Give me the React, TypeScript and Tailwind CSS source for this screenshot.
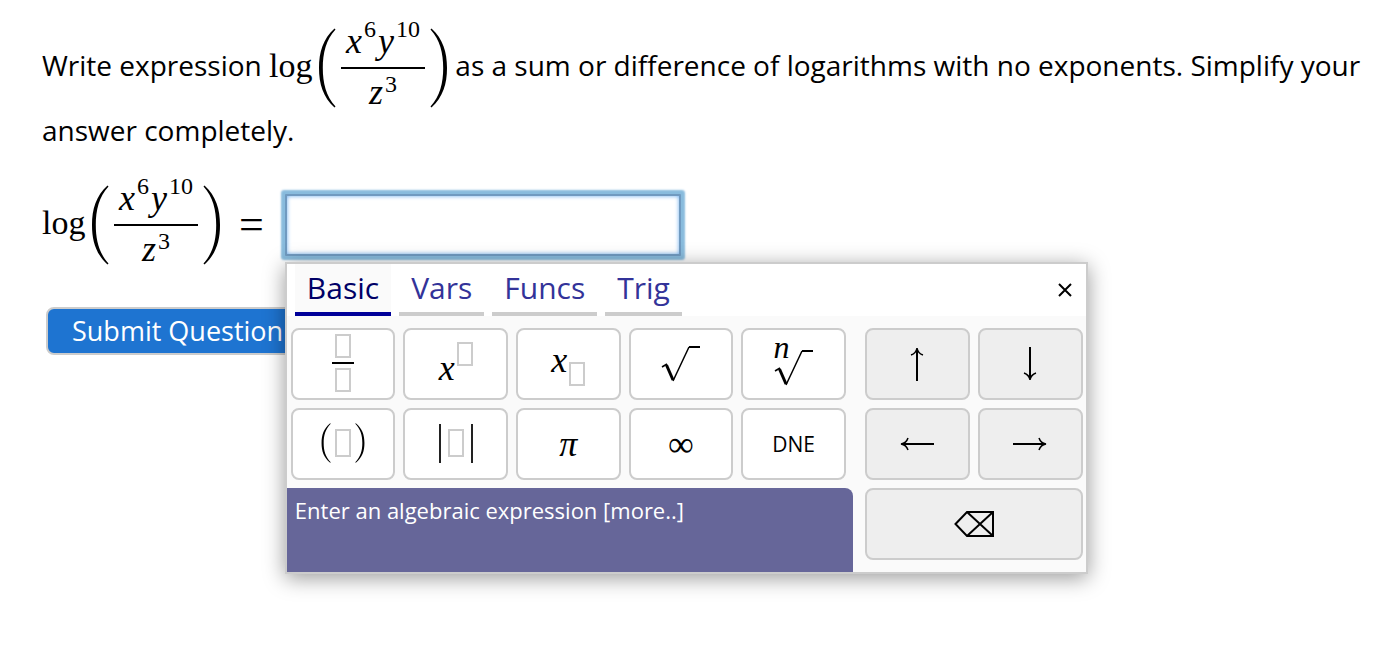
import { useState } from "react";
import type { ReactNode } from "react";

const tabs = ["Basic", "Vars", "Funcs", "Trig"];

function Paren({ flip = false, small = false }: { flip?: boolean; small?: boolean }) {
    return (
        <svg
            viewBox="0 0 18 80"
            preserveAspectRatio="none"
            className={`${small ? "h-10 w-[10px]" : "h-20 w-[18px]"} shrink-0 ${flip ? "-scale-x-100" : ""}`}
            aria-hidden="true"
        >
            <path d="M16.5 0.5C5 11 1 24 1 40S5 69 16.5 79.5L17.5 78.5C8 68 4.8 55 4.8 40S8 12 17.5 1.5Z" fill="black" />
        </svg>
    );
}

function Fraction() {
    return (
        <span className="flex w-[84px] flex-col items-center text-[36px] leading-[30px]">
            <span className="flex h-[41px] gap-[2px]">
                <i>x</i>
                <span className="-mt-3 text-2xl leading-[30px]">6</span>
                <i>y</i>
                <span className="-mt-3 text-2xl leading-[30px]">10</span>
            </span>
            <span className="h-[2px] w-full bg-black"></span>
            <span className="flex h-[41px] gap-[2px] pt-2">
                <i>z</i>
                <span className="-mt-2 text-2xl leading-[30px]">3</span>
            </span>
        </span>
    );
}

function LogExpression() {
    return (
        <span className="inline-flex h-[84px] items-center align-middle font-['Liberation_Serif',serif]">
            <span className="w-[49px] pb-1 text-[34px] leading-9">log</span>
            <Paren />
            <span className="px-[5px]">
                <Fraction />
            </span>
            <Paren flip />
        </span>
    );
}

function Box({ tall = false }: { tall?: boolean }) {
    return <span className={`block w-4 border-2 border-[#ccc] ${tall ? "h-7" : "h-6"}`}></span>;
}

function Radical() {
    return (
        <svg viewBox="0 0 40 38" className="h-[38px] w-10" fill="none" stroke="black">
            <path d="M1 22L6 19" strokeWidth="1.5" />
            <path d="M5.5 20L12 35" strokeWidth="3" />
            <path d="M12 36L28 2" strokeWidth="1.5" />
            <path d="M28 2H39" strokeWidth="2" />
        </svg>
    );
}

function Key({ label, nav = false, wide = false, children }: { label: string; nav?: boolean; wide?: boolean; children: ReactNode }) {
    return (
        <button
            aria-label={label}
            className={`flex h-[72px] items-center justify-center rounded-lg border-2 border-[#ccc] font-['Liberation_Serif',serif] text-[36px] ${nav ? "bg-[#eee]" : "bg-white"} ${wide ? "col-span-2" : ""}`}
        >
            {children}
        </button>
    );
}

function Arrow({ className = "" }: { className?: string }) {
    return (
        <svg viewBox="0 0 34 14" className={`h-[14px] w-[34px] ${className}`} fill="none" stroke="black" strokeWidth="2">
            <path d="M2 7H34" />
            <path d="M8 1C7 4 4 6.5 1 7C4 7.5 7 10 8 13" strokeWidth="1.5" />
        </svg>
    );
}

function Keyboard() {
    const [active, setActive] = useState("Basic");

    return (
        <div className="absolute top-[68px] left-0 z-10 w-[803px] border-2 border-[#ccc] bg-[#fafafa] shadow-[0_4px_20px_rgba(0,0,0,0.4)]">
            <div className="flex h-[52px] items-stretch gap-2 bg-white pl-2">
                {tabs.map((tab) => (
                    <button
                        key={tab}
                        onClick={() => setActive(tab)}
                        className={`border-b-4 px-3 text-[30px] leading-[48px] ${tab === active ? "border-[#009] bg-[#fafafa] text-[#006]" : "border-[#ccc] text-[#339]"}`}
                    >
                        {tab}
                    </button>
                ))}
                <button aria-label="Close" className="ml-auto px-[14px]">
                    <svg viewBox="0 0 14 14" className="size-[14px]" stroke="black" strokeWidth="2">
                        <path d="M1 1L13 13M13 1L1 13" />
                    </svg>
                </button>
            </div>

            <div className="flex gap-3 pt-3 pr-[3px]">
                <div className="flex flex-1 flex-col gap-2">
                    <div className="grid grid-cols-5 gap-2 pr-[7px] pl-1">
                        <Key label="Fraction">
                            <span className="flex flex-col items-center gap-1 pb-[2px]">
                                <Box />
                                <span className="h-[2px] w-[22px] bg-black"></span>
                                <Box />
                            </span>
                        </Key>
                        <Key label="Exponent">
                            <span className="flex items-start gap-[2px]">
                                <i className="pt-2 leading-9">x</i>
                                <Box />
                            </span>
                        </Key>
                        <Key label="Subscript">
                            <span className="flex items-end gap-[2px]">
                                <i className="pb-2 leading-9">x</i>
                                <Box />
                            </span>
                        </Key>
                        <Key label="Square root">
                            <Radical />
                        </Key>
                        <Key label="Nth root">
                            <span className="relative flex pt-2">
                                <i className="absolute -top-3 left-0 text-[32px] leading-9">n</i>
                                <Radical />
                            </span>
                        </Key>
                        <Key label="Parentheses">
                            <span className="flex items-center gap-1 pb-[2px]">
                                <Paren small />
                                <Box tall />
                                <Paren small flip />
                            </span>
                        </Key>
                        <Key label="Absolute value">
                            <span className="flex items-center gap-[7px] pb-[2px]">
                                <span className="h-[39px] w-[2px] bg-[#222]"></span>
                                <Box tall />
                                <span className="h-[39px] w-[2px] bg-[#222]"></span>
                            </span>
                        </Key>
                        <Key label="Pi"><i>π</i></Key>
                        <Key label="Infinity">∞</Key>
                        <Key label="DNE">
                            <span className="font-['Open_Sans',sans-serif] text-[21px]">DNE</span>
                        </Key>
                    </div>
                    <div className="h-[84px] rounded-tr-lg bg-[#669] px-2 py-1 text-[22px] leading-9 font-medium text-white">
                        Enter an algebraic expression <a href="#more">[more..]</a>
                    </div>
                </div>

                <div className="grid w-[218px] grid-cols-2 content-start gap-2">
                    <Key label="Up" nav><Arrow className="rotate-90" /></Key>
                    <Key label="Down" nav><Arrow className="-rotate-90" /></Key>
                    <Key label="Left" nav><Arrow /></Key>
                    <Key label="Right" nav><Arrow className="rotate-180" /></Key>
                    <Key label="Backspace" nav wide>
                        <svg viewBox="0 0 40 26" className="h-[26px] w-10" fill="none" stroke="black" strokeWidth="2">
                            <path d="M1.5 13L13 1H39V25H13ZM13 1L39 25M13 25L39 1" />
                        </svg>
                    </Key>
                </div>
            </div>
        </div>
    );
}

export default function App() {
    return (
        <main className="min-h-screen bg-white pt-[26px] pr-4 pb-20 pl-[42px] font-['Open_Sans',sans-serif] text-[28px] leading-10 text-black">
            <p>
                Write expression <LogExpression /> as a sum or difference of logarithms with no exponents. Simplify your answer completely.
            </p>

            <div className="mt-[33px] flex items-center">
                <LogExpression />
                <span className="pr-[21px] pl-[18px] font-['Liberation_Serif',serif] text-[44px]">=</span>
                <div className="relative">
                    <input
                        aria-label="Answer"
                        className="block h-[62px] w-[396px] rounded-[1px] border-2 border-[#709ac0] bg-white px-2 shadow-[0_0_2px_4px_#88bbdd,inset_0_0_4px_#66aaee] outline-none"
                    />
                    <Keyboard />
                </div>
            </div>

            <button className="mt-10 ml-1 h-12 rounded-lg border-2 border-[#ccc] bg-[#1e74d1] px-6 text-[27px] text-white">
                Submit Question
            </button>
        </main>
    );
}
